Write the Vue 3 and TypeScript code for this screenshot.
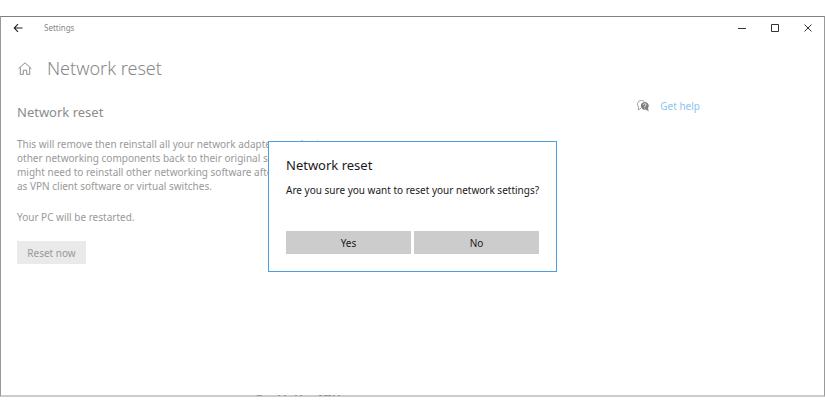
<script setup lang="ts">
import { ref } from 'vue'

const description: string[] = [
  'This will remove then reinstall all your network adapters, and set',
  'other networking components back to their original settings. You',
  'might need to reinstall other networking software afterwards, such',
  'as VPN client software or virtual switches.',
]
const dialogOpen = ref<boolean>(true)

function openDialog(): void {
  dialogOpen.value = true
}
function closeDialog(): void {
  dialogOpen.value = false
}
</script>

<template>
  <div class="desktop">
    <div class="window">
      <header class="titlebar">
        <button class="icon-button back" type="button" aria-label="Back">
          <svg width="10" height="10" viewBox="0 0 10 10">
            <path d="M9.5 5H1.2M5 1.2L1.2 5L5 8.8" fill="none" stroke="#222" stroke-width="1.1" />
          </svg>
        </button>
        <span class="app-name">Settings</span>
        <div class="controls">
          <button class="icon-button" type="button" aria-label="Minimize">
            <svg width="8" height="8" viewBox="0 0 8 8"><path d="M0 4.5H8" stroke="#333" /></svg>
          </button>
          <button class="icon-button" type="button" aria-label="Maximize">
            <svg width="8" height="8" viewBox="0 0 8 8"><path d="M.5.5H7.5V7.5H.5Z" fill="none" stroke="#333" /></svg>
          </button>
          <button class="icon-button" type="button" aria-label="Close">
            <svg width="8" height="8" viewBox="0 0 8 8"><path d="M.5.5L7.5 7.5M7.5.5L.5 7.5" stroke="#333" /></svg>
          </button>
        </div>
      </header>

      <div class="page-title">
        <svg width="14" height="13" viewBox="0 0 14 13">
          <path d="M.6 6.7L7 .8L13.4 6.7M2.3 5.5V12.4H5.3V8.2H8.7V12.4H11.7V5.5" fill="none" stroke="#8c8c8c" />
        </svg>
        <h1>Network reset</h1>
      </div>

      <main class="content">
        <section class="reset">
          <h2>Network reset</h2>
          <p class="description">
            <span v-for="line in description" :key="line">{{ line }}</span>
          </p>
          <p class="notice">Your PC will be restarted.</p>
          <button class="reset-button" type="button" @click="openDialog">Reset now</button>
        </section>
        <aside class="help">
          <svg width="12" height="12" viewBox="0 0 12 12">
            <path d="M4 8.2L1.4 10V6.8A3.6 3.6 0 1 1 7.4 1.6" fill="none" stroke="#999" stroke-width=".9" />
            <path d="M7.6 1.9A3.9 3.9 0 1 0 9 9.5L11.7 11.4L11 8.1A3.9 3.9 0 0 0 7.6 1.9Z" fill="#808080" />
            <path d="M6.4 4.8C6.5 3.2 9.1 3.3 8.9 4.9C8.8 5.8 7.7 5.7 7.7 6.9M7.7 7.7V8.6" fill="none" stroke="#fff" stroke-width=".9" />
          </svg>
          <a href="#">Get help</a>
        </aside>
      </main>

      <svg class="edge-marks" width="84" height="2" viewBox="0 0 84 2">
        <path d="M0 .5H5M21 .5H23M27 .5H29M38 .5H40M43 .5H45M62 .5H65M67 .5H74M76 .5H78M81 .5H83" stroke="#999" />
      </svg>
    </div>

    <div v-if="dialogOpen" class="overlay">
      <div class="dialog" role="dialog" aria-labelledby="dialog-title">
        <h2 id="dialog-title">Network reset</h2>
        <p>Are you sure you want to reset your network settings?</p>
        <div class="actions">
          <button type="button" @click="closeDialog">Yes</button>
          <button type="button" @click="closeDialog">No</button>
        </div>
      </div>
    </div>
  </div>
</template>

<style>
body {
  background: #fff;
}
</style>

<style scoped>
.desktop {
  position: relative;
  box-sizing: border-box;
  min-height: 100vh;
  padding: 16px 0;
  display: flex;
  font-family: "Noto Sans", "Open Sans", sans-serif;
  font-size: 10px;
  line-height: 14px;
  color: #999;
}
h1,
h2,
p {
  margin: 0;
  font-weight: 400;
}
button {
  font: inherit;
  color: inherit;
  border: 0;
  padding: 0;
}
svg {
  display: block;
}
.window {
  position: relative;
  flex: 1;
  border: 1px solid #999;
  border-top-color: #808080;
  border-bottom: 2px solid #ccc;
}
.titlebar {
  display: flex;
  align-items: center;
  height: 22px;
}
.icon-button {
  display: flex;
  align-items: center;
  justify-content: center;
  width: 33px;
  height: 22px;
  background: none;
}
.app-name {
  margin-left: 10px;
  font-size: 8px;
  color: #888;
}
.controls {
  display: flex;
  margin-left: auto;
}
.page-title {
  display: flex;
  align-items: center;
  gap: 15px;
  padding: 17px 17px 0;
}
.page-title h1 {
  font-size: 18px;
  font-weight: 300;
  line-height: 24px;
  color: #888;
}
.content {
  display: flex;
  justify-content: space-between;
  padding: 21px 124px 0 16px;
}
.reset h2,
.dialog h2 {
  font-size: 13px;
  line-height: 22px;
}
.reset h2 {
  color: #8c8c8c;
}
.description {
  margin-top: 14px;
}
.description span {
  display: block;
  white-space: nowrap;
}
.notice {
  margin-top: 17px;
}
.reset-button {
  margin-top: 17px;
  width: 69px;
  height: 23px;
  background: #eaeaea;
}
.help {
  display: flex;
  align-items: center;
  align-self: flex-start;
  gap: 11px;
  margin-top: -2px;
}
.help a {
  color: #8cc5f0;
  text-decoration: none;
}
.edge-marks {
  position: absolute;
  left: 256px;
  bottom: -2px;
}
.overlay {
  position: absolute;
  inset: 0;
  display: grid;
  place-items: center;
}
.dialog {
  box-sizing: border-box;
  width: 289px;
  padding: 12px 17px 17px;
  border: 1px solid #4a9fdf;
  background: #fff;
  color: #1a1a1a;
}
.dialog p {
  margin-top: 7px;
  white-space: nowrap;
}
.actions {
  display: grid;
  grid-template-columns: 1fr 1fr;
  gap: 3px;
  margin-top: 34px;
}
.actions button {
  height: 23px;
  background: #ccc;
}
</style>
